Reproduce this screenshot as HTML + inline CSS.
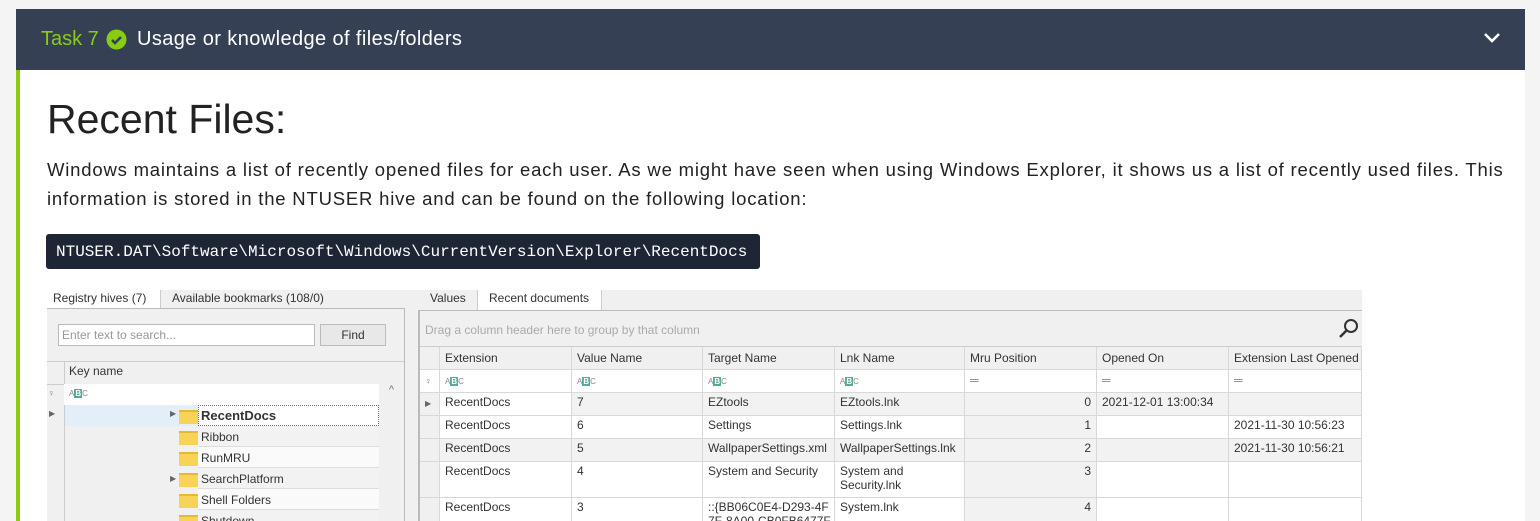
<!DOCTYPE html><html><head><style>
html,body{margin:0;width:1540px;height:521px;overflow:hidden}
body{background:#f4f4f4;font-family:"Liberation Sans",sans-serif;position:relative}
.hdr{position:absolute;left:16px;top:9px;width:1509px;height:61px;background:#364055;color:#fff;font-size:20px}
.card{position:absolute;left:16px;top:70px;width:1509px;height:451px;background:#fff;border-left:4px solid #88cc14;box-sizing:border-box}
.a{position:absolute}
.ss{font-family:"Liberation Sans",sans-serif;font-size:12px;color:#333;white-space:nowrap}
.cell{position:absolute;box-sizing:border-box;border-right:1px solid #d8d8d8;border-bottom:1px solid #d8d8d8;padding:2px 5px;font-size:12px;color:#333;line-height:14px;white-space:nowrap;overflow:hidden}
.fold{display:inline-block;width:19px;height:14px;background:#f7d458;border-top:2px solid #e8b830;box-sizing:border-box;vertical-align:middle;margin-right:3px}
.abc{font-size:8px;color:#888}
.abc b{background:#5a9;color:#fff;padding:0 1px}
#clip{position:absolute;left:0;top:0;width:1540px;height:521px;overflow:hidden}
</style></head><body><div id="clip">
<div class="hdr">
<span class="a" style="left:25px;top:19px;color:#88cc14">Task 7</span>
<svg class="a" style="left:90px;top:20px" width="21" height="21"><circle cx="10.5" cy="10.5" r="10" fill="#88cc14"/><path d="M6 11l3 3 6-6" stroke="#364055" stroke-width="2.6" fill="none"/></svg>
<span class="a" style="left:121px;top:19px;letter-spacing:0.4px">Usage or knowledge of files/folders</span>
<svg class="a" style="left:1467px;top:22px" width="18" height="14"><path d="M2 3l7 7 7-7" stroke="#fff" stroke-width="2.6" fill="none"/></svg>
</div>
<div class="card"></div>
<div class="a" style="left:47px;top:96px;font-size:41px;color:#222">Recent Files:</div>
<div class="a" style="left:47px;top:155px;width:1470px;font-size:18.5px;line-height:29px;color:#222;letter-spacing:0.8px">Windows maintains a list of recently opened files for each user. As we might have seen when using Windows Explorer, it shows us a list of recently used files. This information is stored in the NTUSER hive and can be found on the following location:</div>
<div class="a" style="left:46px;top:234px;width:714px;height:35px;background:#1e2636;border-radius:3px;color:#fff;font-family:'Liberation Mono',monospace;font-size:16px;line-height:37px;padding-left:10px;box-sizing:border-box">NTUSER.DAT\Software\Microsoft\Windows\CurrentVersion\Explorer\RecentDocs</div>
<div class="a" style="left:47px;top:290px;width:1315px;height:231px;background:#f0f0f0"></div>
<div class="a ss" style="left:47px;top:290px;width:114px;height:18px;background:#fff;border-right:1px solid #ccc;padding:1px 6px;box-sizing:border-box">Registry hives (7)</div>
<div class="a ss" style="left:172px;top:291px">Available bookmarks (108/0)</div>
<div class="a" style="left:47px;top:308px;width:357px;height:213px;border-right:1px solid #bbb;border-top:1px solid #bbb;background:#f0f0f0"></div>
<div class="a ss" style="left:58px;top:324px;width:257px;height:22px;background:#fff;border:1px solid #bbb;box-sizing:border-box;color:#999;padding:3px 3px">Enter text to search...</div>
<div class="a ss" style="left:320px;top:324px;width:66px;height:22px;background:#e8e8e8;border:1px solid #bbb;box-sizing:border-box;text-align:center;padding-top:3px">Find</div>
<div class="a" style="left:47px;top:361px;width:357px;height:22px;border-top:1px solid #ccc;border-bottom:1px solid #ccc;background:#f0f0f0"></div>
<div class="a ss" style="left:64px;top:362px;height:21px;border-left:1px solid #ccc;padding:2px 4px">Key name</div>
<div class="a" style="left:64px;top:384px;width:315px;height:21px;background:#fff"></div>
<div class="a abc" style="left:69px;top:389px">A<b>B</b>C</div>
<div class="a" style="left:48px;top:388px;font-size:9px;color:#777">♀</div>
<div class="a" style="left:379px;top:384px;width:25px;height:137px;background:#f0f0f0;font-size:11px;color:#777;text-align:center">^</div>
<div class="a" style="left:64px;top:405px;width:1px;height:116px;background:#ccc"></div>
<div class="a" style="left:65px;top:405px;width:314px;height:21px;background:#e4eef8"></div>
<div class="a" style="left:198px;top:405px;width:181px;height:21px;background:#fff;border:1px dotted #777;box-sizing:border-box"></div>
<div class="a" style="left:49px;top:409px;font-size:8px;color:#666">▶</div>
<div class="a ss" style="left:170px;top:409px;font-size:8px;color:#666">▶</div>
<div class="a ss" style="left:179px;top:408px"><span class="fold"></span><b style="font-size:13px">RecentDocs</b></div>
<div class="a" style="left:198px;top:426px;width:181px;height:95px;background:repeating-linear-gradient(#f2f2f2 0 20px,#ddd 20px 21px,#fafafa 21px 41px,#ddd 41px 42px)"></div>
<div class="a ss" style="left:179px;top:430px"><span class="fold"></span>Ribbon</div>
<div class="a ss" style="left:179px;top:451px"><span class="fold"></span>RunMRU</div>
<div class="a ss" style="left:170px;top:474px;font-size:8px;color:#666">▶</div>
<div class="a ss" style="left:179px;top:472px"><span class="fold"></span>SearchPlatform</div>
<div class="a ss" style="left:179px;top:493px"><span class="fold"></span>Shell Folders</div>
<div class="a ss" style="left:179px;top:514px"><span class="fold"></span>Shutdown</div>
<div class="a ss" style="left:430px;top:291px">Values</div>
<div class="a ss" style="left:477px;top:290px;width:125px;height:20px;background:#fff;border-left:1px solid #ccc;border-right:1px solid #ccc;padding:1px 11px;box-sizing:border-box">Recent documents</div>
<div class="a" style="left:418px;top:310px;width:944px;height:211px;border-left:2px solid #bbb;border-top:1px solid #bbb;background:#f0f0f0;box-sizing:border-box"></div>
<div class="a ss" style="left:425px;top:323px;color:#aaa">Drag a column header here to group by that column</div>
<svg class="a" style="left:1338px;top:318px" width="22" height="22"><circle cx="13" cy="8" r="6" stroke="#333" stroke-width="2" fill="none"/><path d="M9 12l-7 7" stroke="#333" stroke-width="2.5"/></svg>
<div class="a" style="left:420px;top:346px;width:942px;height:175px;background:#fff"></div>
<div id="g"></div>
</div>
<script>
var cols=[420,440,572,703,835,965,1097,1229,1362];
var heads=["","Extension","Value Name","Target Name","Lnk Name","Mru Position","Opened On","Extension Last Opened"];
var rows=[[393,23,["RecentDocs","7","EZtools","EZtools.lnk","0","2021-12-01 13:00:34",""]],[416,23,["RecentDocs","6","Settings","Settings.lnk","1","","2021-11-30 10:56:23"]],[439,23,["RecentDocs","5","WallpaperSettings.xml","WallpaperSettings.lnk","2","","2021-11-30 10:56:21"]],[462,36,["RecentDocs","4","System and Security","System and<br>Security.lnk","3","",""]],[498,23,["RecentDocs","3","::{BB06C0E4-D293-4F<br>7F-8A00-CB0FB6477F","System.lnk","4","",""]]];
var h="";
function c(x,y,w,hh,t,bg,extra){h+='<div class="cell" style="left:'+x+'px;top:'+y+'px;width:'+w+'px;height:'+hh+'px;background:'+bg+';'+(extra||'')+'">'+t+'</div>';}
for(var i=0;i<8;i++){var w=cols[i+1]-cols[i];c(cols[i],346,w,24,heads[i],"#f0f0f0","padding-top:4px;border-top:1px solid #ccc");
var f=i==0?'<span style="font-size:9px;color:#777">♀</span>':(i<5?'<span class="abc">A<b>B</b>C</span>':'<span style="color:#888">═</span>');c(cols[i],370,w,23,f,"#fff","padding-top:3px");}
rows.forEach(function(r,ri){for(var i=0;i<8;i++){var w=cols[i+1]-cols[i];var t=i==0?(ri==0?'<span style="font-size:8px;color:#666">▶</span>':''):r[2][i-1];
var bg=i==0?"#f0f0f0":(i==5?"#f2f2f2":(ri%2==0&&ri<3?"#f2f2f2":"#fff"));if(ri==0&&i==1)bg="#fff";
c(cols[i],r[0],w,r[1],t,bg,(i==5?"text-align:right;":"")+(ri==4?"border-bottom:none;":""));}});
document.getElementById("g").innerHTML=h;
</script>
</body></html>
